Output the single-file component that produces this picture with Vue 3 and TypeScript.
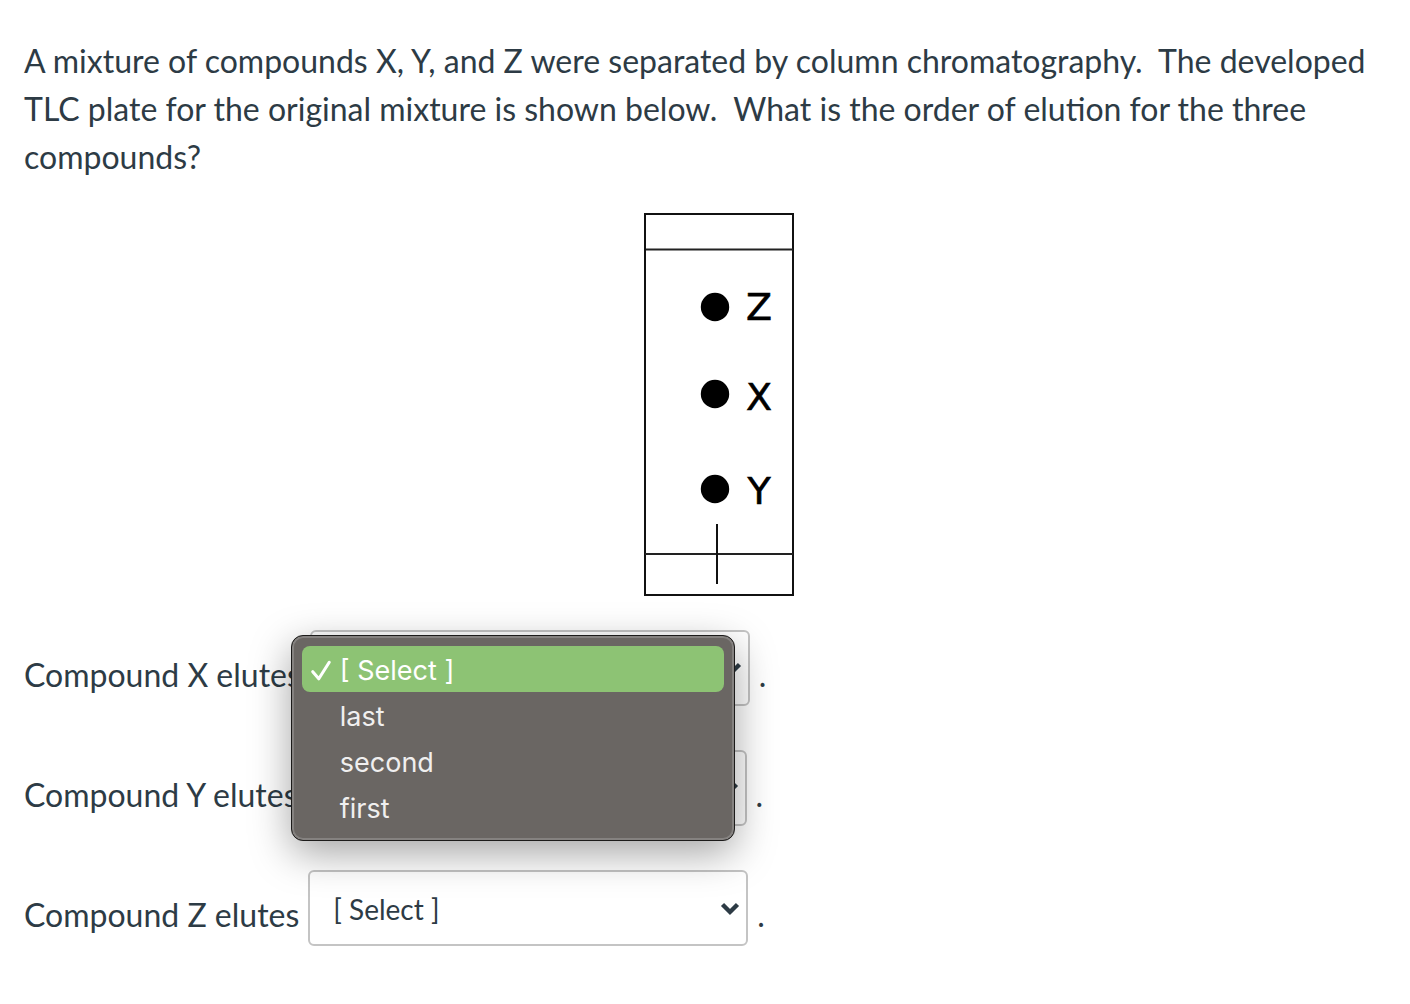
<script setup lang="ts">
import { ref } from 'vue'

interface Blank {
  id: string
  compound: string
  answer: string
}

interface Spot {
  name: string
  y: number
  baseline: number
}

const placeholder = '[ Select ]'
const options: string[] = [placeholder, 'last', 'second', 'first']

const blanks = ref<Blank[]>([
  { id: 'blank-x', compound: 'X', answer: placeholder },
  { id: 'blank-y', compound: 'Y', answer: placeholder },
  { id: 'blank-z', compound: 'Z', answer: placeholder },
])

const spots: Spot[] = [
  { name: 'Z', y: 95, baseline: 108 },
  { name: 'X', y: 182, baseline: 198 },
  { name: 'Y', y: 277, baseline: 292 },
]

const openId = ref<string | null>('blank-x')

function choose(blank: Blank, option: string): void {
  blank.answer = option
  openId.value = null
}

function openMenu(event: Event, blank: Blank): void {
  event.preventDefault()
  openId.value = openId.value === blank.id ? null : blank.id
}
</script>

<template>
  <main class="question">
    <p class="prompt">
      A mixture of compounds X, Y, and Z were separated by column
      chromatography.&nbsp; The developed TLC plate for the original mixture is
      shown below.&nbsp; What is the order of elution for the three compounds?
    </p>

    <svg class="plate" viewBox="0 0 154 386" role="img" aria-label="TLC plate with spots Z, X and Y">
      <g fill="none" stroke="#111" stroke-width="2">
        <rect x="5" y="2" width="148" height="381" />
        <path d="M6 37.5H153M5 342H153" stroke="#222" />
        <path d="M77 312V372" />
      </g>
      <g v-for="spot in spots" :key="spot.name">
        <circle cx="75" :cy="spot.y" r="14.2" />
        <text class="spot-name" x="119" :y="spot.baseline" text-anchor="middle">{{ spot.name }}</text>
      </g>
    </svg>

    <form class="blanks">
      <div v-for="blank in blanks" :key="blank.id" class="row">
        <label class="words" :for="blank.id">Compound {{ blank.compound }} elutes</label>
        <div class="picker">
          <select :id="blank.id" v-model="blank.answer" class="select" @mousedown="openMenu($event, blank)">
            <option v-for="option in options" :key="option">{{ option }}</option>
          </select>
          <svg class="chevron" viewBox="0 0 20 14" aria-hidden="true">
            <path d="M2.5 2.5L10 10L17.5 2.5" fill="none" stroke="#2d3b45" stroke-width="4.4" />
          </svg>
          <div v-if="openId === blank.id" class="menu" role="listbox">
            <button
              v-for="option in options"
              :key="option"
              type="button"
              role="option"
              class="option"
              :class="{ current: option === blank.answer }"
              :aria-selected="option === blank.answer"
              @click="choose(blank, option)"
            >
              <svg class="tick" viewBox="0 0 20 20" aria-hidden="true">
                <path
                  v-if="option === blank.answer"
                  d="M2.500 11.500L8 18L17.500 3"
                  fill="none"
                  stroke="#fff"
                  stroke-width="2.8"
                  stroke-linecap="round"
                  stroke-linejoin="round"
                />
              </svg>
              <span>{{ option }}</span>
            </button>
          </div>
        </div>
        <span class="words">.</span>
      </div>
    </form>
  </main>
</template>

<style>
body {
  margin: 0;
  background: #fff;
}
</style>

<style scoped>
.question {
  padding: 37px 0 32px 24px;
  color: #2d3b45;
  font-family: Lato, "Liberation Sans", sans-serif;
  font-size: 32px;
  line-height: 48px;
}

.prompt {
  margin: 0;
}

.plate {
  display: block;
  width: 154px;
  margin: 31px auto 32px;
}

.spot-name {
  stroke: #000;
  stroke-width: 0.6px;
  font-family: "DejaVu Sans", sans-serif;
  font-size: 38px;
}

.blanks {
  display: flex;
  flex-direction: column;
  gap: 44px;
}

.row {
  display: flex;
  align-items: center;
  gap: 9px;
}

.words {
  padding-top: 14px;
}

.picker {
  position: relative;
  width: 440px;
}

.select {
  display: block;
  box-sizing: border-box;
  width: 100%;
  height: 76px;
  padding: 2px 48px 0 23px;
  border: 2px solid #c4c4c4;
  border-radius: 6px;
  background: transparent;
  color: inherit;
  font-family: inherit;
  font-size: 28px;
  appearance: none;
}

.chevron {
  position: absolute;
  top: 32px;
  right: 8px;
  width: 20px;
  height: 14px;
  pointer-events: none;
}

.menu {
  position: absolute;
  z-index: 1;
  top: 5px;
  left: -19px;
  box-sizing: border-box;
  width: 444px;
  padding: 10px;
  border: 1px solid #1c1b1a;
  border-radius: 12px;
  background: #6a6663;
  box-shadow: inset 0 0 0 2px #858280, 0 12px 40px rgba(0, 0, 0, 0.36);
}

.option {
  display: flex;
  align-items: center;
  gap: 8px;
  width: 100%;
  height: 46px;
  padding: 2px 8px 0;
  border: 0;
  border-radius: 8px;
  background: transparent;
  color: #f0efef;
  font-family: Inter, Roboto, sans-serif;
  font-size: 27px;
  text-align: left;
}

.current {
  background: #8dc374;
  color: #fff;
}

.tick {
  width: 22px;
  height: 22px;
}
</style>
